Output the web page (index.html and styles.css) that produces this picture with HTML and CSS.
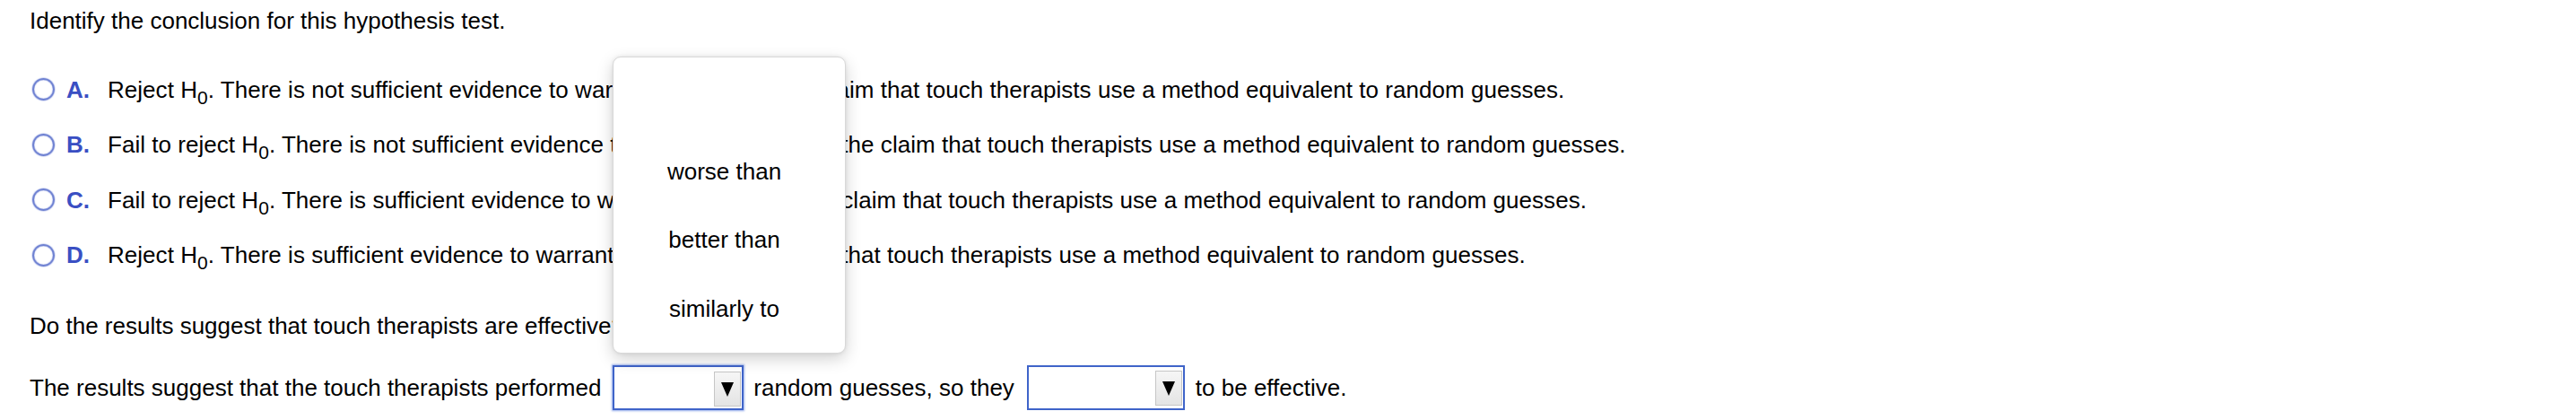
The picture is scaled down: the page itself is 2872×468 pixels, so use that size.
FILE: index.html
```html
<!DOCTYPE html>
<html>
<head>
<meta charset="utf-8">
<link rel="stylesheet" href="styles.css">
</head>
<body>
<div class="page">
  <div class="title">Identify the conclusion for this hypothesis test.</div>
  <div class="options">
    <div class="option"><span class="radio"></span><span class="letter">A.</span><span class="text">Reject H<sub class="sub">0</sub>. There is not sufficient evidence to warrant rejection of the claim that touch therapists use a method equivalent to random guesses.</span></div>
    <div class="option"><span class="radio"></span><span class="letter">B.</span><span class="text">Fail to reject H<sub class="sub">0</sub>. There is not sufficient evidence to warrant rejection of the claim that touch therapists use a method equivalent to random guesses.</span></div>
    <div class="option"><span class="radio"></span><span class="letter">C.</span><span class="text">Fail to reject H<sub class="sub">0</sub>. There is sufficient evidence to warrant rejection of the claim that touch therapists use a method equivalent to random guesses.</span></div>
    <div class="option"><span class="radio"></span><span class="letter">D.</span><span class="text">Reject H<sub class="sub">0</sub>. There is sufficient evidence to warrant rejection of the claim that touch therapists use a method equivalent to random guesses.</span></div>
  </div>
  <div class="question">Do the results suggest that touch therapists are effective?</div>
  <div class="answer">
    <span class="seg">The results suggest that the touch therapists performed</span>
    <span class="select select-focus"><span class="arrow"><span class="tri"></span></span></span>
    <span class="seg seg-a">random guesses, so they</span>
    <span class="select select-wide"><span class="arrow"><span class="tri"></span></span></span>
    <span class="seg seg-b">to be effective.</span>
  </div>
</div>
<div class="menu">
  <div class="item"></div>
  <div class="item">worse than</div>
  <div class="item">better than</div>
  <div class="item">similarly to</div>
</div>
</body>
</html>
```
FILE: styles.css
```css
html, body {
  margin: 0;
  padding: 0;
  background: #ffffff;
}
body {
  font-family: "Liberation Sans", Arial, Helvetica, sans-serif;
  font-size: 26px;
  color: #000000;
  line-height: 30px;
  position: relative;
  width: 2872px;
  height: 468px;
  overflow: hidden;
}
.page {
  padding: 8px 0 0 33px;
}
.title {
  height: 30px;
  white-space: nowrap;
}
.options {
  margin-top: 46.5px;
  display: flex;
  flex-direction: column;
  gap: 31.6px;
  letter-spacing: 0.035px;
}
.option {
  display: flex;
  align-items: center;
  height: 30px;
  white-space: nowrap;
}
.radio {
  box-sizing: border-box;
  width: 25px;
  height: 25px;
  margin-left: 3px;
  border-radius: 50%;
  border: 2.5px solid #6f82d2;
  box-shadow: 0 0 1px 0.5px rgba(140, 155, 225, 0.6), inset 0 0 1px 0.5px rgba(140, 155, 225, 0.6);
  flex: none;
}
.letter {
  margin-left: 13px;
  width: 46px;
  font-weight: bold;
  color: #3a4fc3;
  flex: none;
}
.sub {
  font-size: 21px;
  line-height: 0;
  vertical-align: -7px;
}
.question {
  margin-top: 48.7px;
  height: 30px;
  white-space: nowrap;
}
.answer {
  margin-top: 29px;
  display: flex;
  align-items: center;
  height: 50px;
  white-space: nowrap;
}
.select {
  box-sizing: border-box;
  position: relative;
  display: flex;
  justify-content: flex-end;
  align-items: flex-start;
  height: 50px;
  border: 2px solid #3f64c9;
  background: #ffffff;
  padding: 5px 1px 0 0;
  flex: none;
}
.select-focus {
  width: 146px;
  margin-left: 13px;
  box-shadow: 0 0 2px 1px rgba(70, 110, 220, 0.55);
}
.select-wide {
  width: 176px;
  margin-left: 14px;
  padding-top: 4px;
}
.arrow {
  box-sizing: border-box;
  width: 30px;
  height: 39px;
  border: 1px solid #c6c6c6;
  background: linear-gradient(#f6f6f6, #e4e4e4);
  display: flex;
  align-items: center;
  justify-content: center;
}
.tri {
  width: 0;
  height: 0;
  border-left: 7px solid transparent;
  border-right: 7px solid transparent;
  border-top: 16px solid #000000;
  margin-top: 1px;
}
.seg-a {
  margin-left: 11px;
}
.seg-b {
  margin-left: 12px;
}
.menu {
  position: absolute;
  left: 683px;
  top: 63px;
  width: 260px;
  height: 331px;
  box-sizing: border-box;
  padding: 12px 11px 11px 0;
  background: #ffffff;
  border: 1px solid #d8d8d8;
  border-radius: 9px;
  box-shadow: 0 6px 18px rgba(0, 0, 0, 0.18), 0 0 4px rgba(0, 0, 0, 0.08);
  display: flex;
  flex-direction: column;
}
.item {
  height: 77px;
  display: flex;
  align-items: center;
  justify-content: center;
  white-space: nowrap;
}
```
